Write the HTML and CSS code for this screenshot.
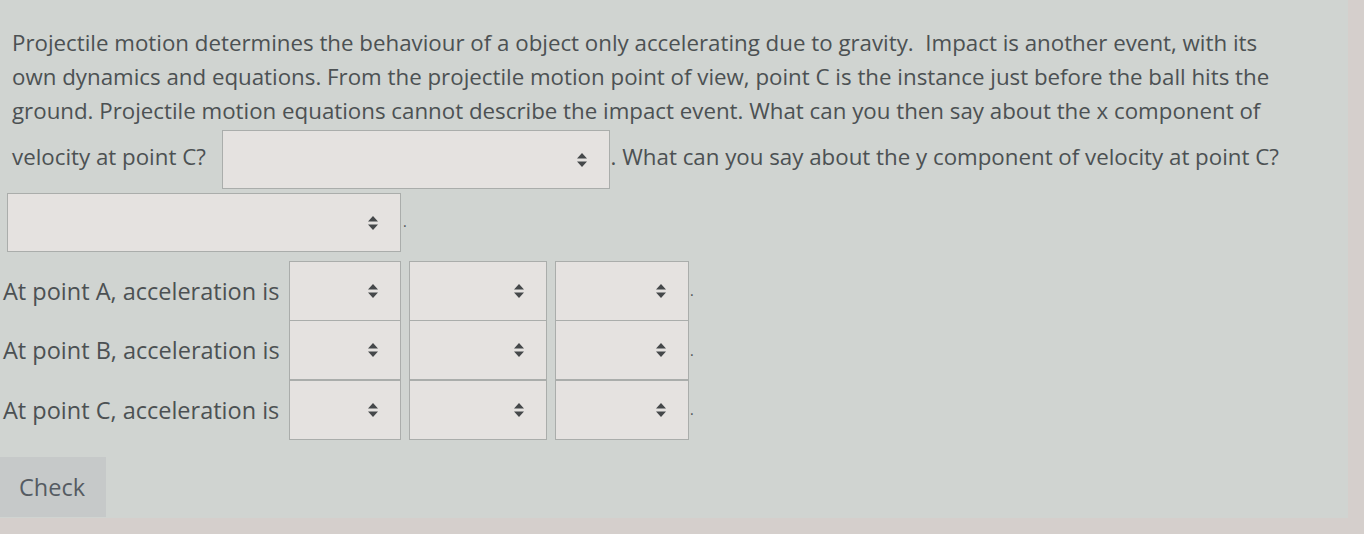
FILE: index.html
```html
<!DOCTYPE html>
<html lang="en">
<head>
<meta charset="utf-8">
<title>Projectile motion</title>
<link rel="stylesheet" href="styles.css">
</head>
<body>
<div class="panel">
  <p class="question">Projectile motion determines the behaviour of a object only accelerating due to gravity.&nbsp; Impact is another event, with its own dynamics and equations. From the projectile motion point of view, point C is the instance just before the ball hits the ground. Projectile motion equations cannot describe the impact event. What can you then say about the x component of velocity at point C? <span class="select wide"><svg class="arrow" viewBox="0 0 10 14" width="10" height="14"><path d="M5 0 L10 5.5 L0 5.5 Z M0 8.5 L10 8.5 L5 14 Z"/></svg></span>. What can you say about the y component of velocity at point C? <span class="select second"><svg class="arrow" viewBox="0 0 10 14" width="10" height="14"><path d="M5 0 L10 5.5 L0 5.5 Z M0 8.5 L10 8.5 L5 14 Z"/></svg></span><span class="dot">.</span></p>

  <div class="rows">
    <div class="row">
      <span class="label">At point A, acceleration is</span>
      <span class="select c1"><svg class="arrow" viewBox="0 0 10 14" width="10" height="14"><path d="M5 0 L10 5.5 L0 5.5 Z M0 8.5 L10 8.5 L5 14 Z"/></svg></span>
      <span class="select c2"><svg class="arrow" viewBox="0 0 10 14" width="10" height="14"><path d="M5 0 L10 5.5 L0 5.5 Z M0 8.5 L10 8.5 L5 14 Z"/></svg></span>
      <span class="select c3"><svg class="arrow" viewBox="0 0 10 14" width="10" height="14"><path d="M5 0 L10 5.5 L0 5.5 Z M0 8.5 L10 8.5 L5 14 Z"/></svg></span>
      <span class="dot">.</span>
    </div>
    <div class="row">
      <span class="label">At point B, acceleration is</span>
      <span class="select c1"><svg class="arrow" viewBox="0 0 10 14" width="10" height="14"><path d="M5 0 L10 5.5 L0 5.5 Z M0 8.5 L10 8.5 L5 14 Z"/></svg></span>
      <span class="select c2"><svg class="arrow" viewBox="0 0 10 14" width="10" height="14"><path d="M5 0 L10 5.5 L0 5.5 Z M0 8.5 L10 8.5 L5 14 Z"/></svg></span>
      <span class="select c3"><svg class="arrow" viewBox="0 0 10 14" width="10" height="14"><path d="M5 0 L10 5.5 L0 5.5 Z M0 8.5 L10 8.5 L5 14 Z"/></svg></span>
      <span class="dot">.</span>
    </div>
    <div class="row">
      <span class="label">At point C, acceleration is</span>
      <span class="select c1"><svg class="arrow" viewBox="0 0 10 14" width="10" height="14"><path d="M5 0 L10 5.5 L0 5.5 Z M0 8.5 L10 8.5 L5 14 Z"/></svg></span>
      <span class="select c2"><svg class="arrow" viewBox="0 0 10 14" width="10" height="14"><path d="M5 0 L10 5.5 L0 5.5 Z M0 8.5 L10 8.5 L5 14 Z"/></svg></span>
      <span class="select c3"><svg class="arrow" viewBox="0 0 10 14" width="10" height="14"><path d="M5 0 L10 5.5 L0 5.5 Z M0 8.5 L10 8.5 L5 14 Z"/></svg></span>
      <span class="dot">.</span>
    </div>
  </div>

  <button class="check">Check</button>
</div>
</body>
</html>
```

FILE: styles.css
```css
html, body {
  margin: 0;
  padding: 0;
}

body {
  background: #d5cfcc;
  width: 1364px;
  height: 534px;
  overflow: hidden;
  font-family: "Open Sans", "Noto Sans", sans-serif;
  color: #4c5153;
}

.panel {
  width: 1348px;
  height: 518px;
  background: #d0d4d1;
  box-sizing: border-box;
  padding-top: 26px;
}

.question {
  margin: 0;
  padding-left: 12px;
  width: 1290px;
  font-size: 22.3px;
  line-height: 34px;
}

.select {
  display: inline-flex;
  align-items: center;
  justify-content: flex-end;
  box-sizing: border-box;
  height: 59px;
  padding-right: 22px;
  background: #e5e2e0;
  border: 1.5px solid #aaadab;
  vertical-align: middle;
}

.arrow {
  fill: #45484a;
  display: block;
}

.wide {
  width: 388px;
  margin: 2px 1px 2px 10px;
}

.second {
  width: 394px;
  margin-left: -5px;
  margin-top: 2px;
}

.dot {
  font-size: 14px;
  margin-left: 2px;
}

.rows {
  display: flex;
  flex-direction: column;
  margin-top: 9px;
  padding-left: 3px;
}

.row {
  display: flex;
  align-items: center;
  height: 59.5px;
  font-size: 23.5px;
}

.label {
  width: 286px;
}

.row .select {
  height: 60px;
  margin-right: 8px;
}

.row .dot {
  margin-left: 0;
}

.c1 { width: 112px; }
.c2 { width: 138px; }
.c3 { width: 134px; margin-right: 1px !important; }

.check {
  display: block;
  margin-top: 17px;
  width: 106px;
  height: 60px;
  border: none;
  background: #c6c9c9;
  font-family: "Open Sans", "Noto Sans", sans-serif;
  font-size: 23.5px;
  color: #555b62;
  text-align: left;
  padding: 0 0 0 19px;
}
```
